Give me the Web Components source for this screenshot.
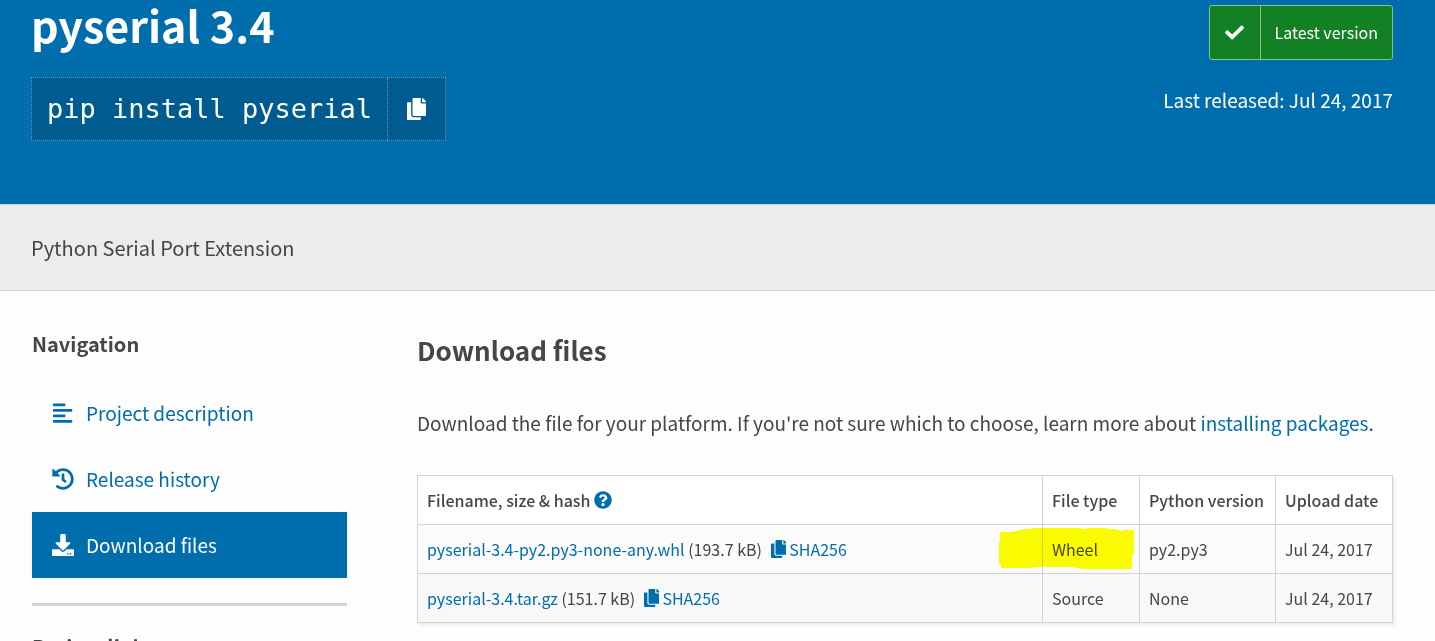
<!DOCTYPE html>
<html lang="en">
<head>
<meta charset="utf-8">
<meta name="viewport" content="width=device-width, initial-scale=1">
<title>pyserial 3.4</title>
<style>
  html { overflow-x: hidden; }
  body {
    --blue: #006dad;
    --line: #d3d3d3;
    --text: #464646;
    margin: 0;
    background: #fdfdfd;
    color: var(--text);
    font-family: "Noto Sans CJK SC", "Noto Sans", sans-serif;
    font-size: 19px;
    line-height: 32px;
  }
</style>
</head>
<body>
<project-header>
  <span slot="title">pyserial 3.4</span>
  <install-command slot="command">pip install pyserial</install-command>
  <version-badge slot="badge">Latest version</version-badge>
  <span slot="date">Last released: Jul 24, 2017</span>
</project-header>
<summary-bar>Python Serial Port Extension</summary-bar>
<project-layout>
  <project-sidebar slot="side">
    <nav-tab icon="align" href="#description">Project description</nav-tab>
    <nav-tab icon="history" href="#history">Release history</nav-tab>
    <nav-tab icon="download" href="#files" active>Download files</nav-tab>
  </project-sidebar>
  <download-panel></download-panel>
</project-layout>

<script>
const define = (name, html, setup) => {
  const template = document.createElement('template');
  template.innerHTML = html;
  customElements.define(name, class extends HTMLElement {
    constructor() {
      super();
      this.attachShadow({ mode: 'open' }).append(template.content.cloneNode(true));
    }
    connectedCallback() { if (setup) setup(this, this.shadowRoot); }
  });
};

const ICONS = {
  copy: ['0 0 448 512', 'M320 448v40c0 13.255-10.745 24-24 24H24c-13.255 0-24-10.745-24-24V120c0-13.255 10.745-24 24-24h72v296c0 30.879 25.121 56 56 56h168zm0-344V0H152c-13.255 0-24 10.745-24 24v368c0 13.255 10.745 24 24 24h272c13.255 0 24-10.745 24-24V128H344c-13.2 0-24-10.8-24-24zm120.971-31.029L375.029 7.029A24 24 0 0 0 358.059 0H352v96h96v-6.059a24 24 0 0 0-7.029-16.97z'],
  check: ['0 0 512 512', 'M173.898 439.404l-166.4-166.4c-9.997-9.997-9.997-26.206 0-36.204l36.203-36.204c9.997-9.998 26.207-9.998 36.204 0L192 312.69 432.095 72.596c9.997-9.997 26.207-9.997 36.204 0l36.203 36.204c9.997 9.997 9.997 26.206 0 36.204l-294.4 294.401c-9.998 9.997-26.207 9.997-36.204-.001z'],
  align: ['0 0 448 512', 'M13 32h262q13 0 13 13v38q0 13-13 13H13Q0 96 0 83V45Q0 32 13 32zM16 160h416q16 0 16 16v32q0 16-16 16H16q-16 0-16-16v-32q0-16 16-16zM13 288h262q13 0 13 13v38q0 13-13 13H13q-13 0-13-13v-38q0-13 13-13zM16 416h416q16 0 16 16v32q0 16-16 16H16q-16 0-16-16v-32q0-16 16-16z'],
  history: ['0 0 512 512', 'M504 255.531c.253 136.64-111.18 248.372-247.82 248.468-59.015.042-113.223-20.53-155.822-54.911-11.077-8.94-11.905-25.541-1.839-35.607l11.267-11.267c8.609-8.609 22.353-9.551 31.891-1.984C173.062 425.135 212.781 440 256 440c101.705 0 184-82.311 184-184 0-101.705-82.311-184-184-184-48.814 0-93.149 18.969-126.068 49.932l50.754 50.754c10.08 10.08 2.941 27.314-11.313 27.314H24c-8.837 0-16-7.163-16-16V38.627c0-14.254 17.234-21.393 27.314-11.314l49.372 49.372C129.209 34.136 189.552 8 256 8c136.81 0 247.747 110.78 248 247.531zm-180.912 78.784l9.823-12.63c8.138-10.463 6.253-25.542-4.21-33.679L288 256.349V152c0-13.255-10.745-24-24-24h-16c-13.255 0-24 10.745-24 24v135.651l65.409 50.874c10.463 8.137 25.541 6.253 33.679-4.21z'],
  download: ['0 0 512 512', 'M216 0h80c13.3 0 24 10.7 24 24v168h87.7c17.8 0 26.7 21.5 14.1 34.1L269.7 378.3c-7.5 7.5-19.8 7.5-27.3 0L90.1 226.1c-12.6-12.6-3.7-34.1 14.1-34.1H192V24c0-13.3 10.7-24 24-24zm296 376v112c0 13.3-10.7 24-24 24H24c-13.3 0-24-10.7-24-24V376c0-13.3 10.7-24 24-24h146.7l49 49c20.1 20.1 52.5 20.1 72.6 0l49-49H488c13.3 0 24 10.7 24 24zm-124 88c0-11-9-20-20-20s-20 9-20 20 9 20 20 20 20-9 20-20zm64 0c0-11-9-20-20-20s-20 9-20 20 9 20 20 20 20-9 20-20z'],
  question: ['0 0 512 512', 'M504 256c0 136.997-111.043 248-248 248S8 392.997 8 256C8 119.083 119.043 8 256 8s248 111.083 248 248zM262.655 90c-54.497 0-89.255 22.957-116.549 63.758-3.536 5.286-2.353 12.415 2.715 16.258l34.699 26.31c5.205 3.947 12.621 3.008 16.665-2.122 17.864-22.658 30.113-35.797 57.303-35.797 20.429 0 45.698 13.148 45.698 32.958 0 14.976-12.363 22.667-32.534 33.976C247.128 238.528 216 254.941 216 296v4c0 6.627 5.373 12 12 12h56c6.627 0 12-5.373 12-12v-1.333c0-28.462 83.186-29.647 83.186-106.667 0-58.002-60.165-102-116.531-102zM256 338c-25.365 0-46 20.635-46 46 0 25.364 20.635 46 46 46s46-20.636 46-46c0-25.364-20.635-46-46-46z']
};

define('icon-glyph', `
  <style>
    :host { display: inline-flex; flex: none; justify-content: center; height: var(--size, 18px); }
    svg { display: block; height: 100%; fill: currentColor; }
  </style>
  <svg aria-hidden="true"><path/></svg>`,
  (el, root) => {
    const [box, d] = ICONS[el.getAttribute('name')];
    root.querySelector('svg').setAttribute('viewBox', box);
    root.querySelector('path').setAttribute('d', d);
  });

define('install-command', `
  <style>
    :host { display: inline-flex; color: #fff; background: #005b91; border: 1px dotted #5f9cc0; }
    code { padding: 0 15px; font: 27px/62px "DejaVu Sans Mono", monospace; white-space: nowrap; }
    button {
      display: flex; align-items: center; justify-content: center; width: 58px; padding: 0;
      color: inherit; background: none; border: 0; border-left: 1px dotted #5f9cc0; cursor: pointer;
    }
    icon-glyph { --size: 22px; }
  </style>
  <code><slot></slot></code>
  <button type="button" aria-label="Copy install command"><icon-glyph name="copy"></icon-glyph></button>`);

define('version-badge', `
  <style>
    :host { display: inline-block; }
    a {
      display: flex; color: #fff; background: #148024; border: 1px solid #89bf91; border-radius: 3px;
      font-size: 16px; line-height: 53px; text-decoration: none; white-space: nowrap;
    }
    .mark { display: flex; align-items: center; justify-content: center; width: 50px; border-right: 1px solid #89bf91; }
    .label { padding: 0 14px; }
    icon-glyph { --size: 19px; }
  </style>
  <a href="#latest"><span class="mark"><icon-glyph name="check"></icon-glyph></span><span class="label"><slot></slot></span></a>`);

define('project-header', `
  <style>
    :host { display: block; color: #fff; background: var(--blue); }
    header { display: flex; flex-wrap: wrap; justify-content: space-between; padding: 0 42px 63px 31px; }
    h1 { margin: 0 0 29px; font-size: 43px; line-height: 48px; font-weight: 600; }
    .package { display: flex; flex-direction: column; align-items: flex-start; }
    .meta { display: flex; flex-direction: column; align-items: flex-end; gap: 24px; padding-top: 5px; }
    p { margin: 0; }
  </style>
  <header>
    <div class="package"><h1><slot name="title"></slot></h1><slot name="command"></slot></div>
    <div class="meta"><slot name="badge"></slot><p><slot name="date"></slot></p></div>
  </header>`);

define('summary-bar', `
  <style>
    :host { display: block; background: #ececec; border: solid var(--line); border-width: 1px 0; }
    p { margin: 0; padding: 27px 42px 26px 31px; font-size: 20px; }
  </style>
  <p><slot></slot></p>`);

define('project-layout', `
  <style>
    :host {
      display: grid; grid-template-columns: minmax(0, 315fr) minmax(0, 976fr); gap: 70px;
      align-items: start; padding: 37px 42px 0 32px;
    }
    @media (max-width: 900px) { :host { grid-template-columns: minmax(0, 1fr); } }
  </style>
  <slot name="side"></slot><slot></slot>`);

define('nav-tab', `
  <style>
    :host { display: block; }
    a {
      display: flex; align-items: center; gap: 12px; padding: 17px 20px;
      color: var(--blue); text-decoration: none;
    }
    :host([active]) a { color: #fff; background: var(--blue); }
    icon-glyph { --size: 22px; width: 22px; }
  </style>
  <a><slot></slot></a>`,
  (el, root) => {
    const link = root.querySelector('a');
    link.setAttribute('href', el.getAttribute('href'));
    const icon = document.createElement('icon-glyph');
    icon.setAttribute('name', el.getAttribute('icon'));
    link.prepend(icon);
  });

define('project-sidebar', `
  <style>
    :host { display: block; }
    h2 { margin: 0; font-size: 20px; line-height: 32px; font-weight: 600; }
    nav { margin-top: 20px; }
    hr { margin: 25px 0; border: 0; border-top: 3px solid var(--line); }
  </style>
  <h2>Navigation</h2>
  <nav aria-label="Project"><slot></slot></nav>
  <hr>
  <h2>Project links</h2>`);

define('highlight-mark', `
  <style>
    :host { position: absolute; left: -44px; top: 3px; mix-blend-mode: multiply; pointer-events: none; }
    svg { display: block; }
  </style>
  <svg width="136" height="42" viewBox="0 0 136 42" aria-hidden="true">
    <path fill="#ff0" d="M1 4H15V3H19V2H24V1H34V0H82V1H88V0H108V1H117V2H120V3H124V2H135V25H134V27H133V41H82V40H76V39H47V38H44V39H34V40H2V36H0V14H1Z"/>
  </svg>`);

define('file-table', `
  <style>
    :host { display: block; overflow-x: auto; padding-bottom: 8px; margin-right: -8px; padding-right: 8px; }
    table {
      width: 100%; min-width: 800px; table-layout: fixed; border-collapse: collapse; background: #fff;
      font-size: 16px; line-height: 24px; box-shadow: 2px 2px 3px rgba(0, 0, 0, .07);
    }
    .type { width: 97px; }
    .python { width: 136px; }
    .date { width: 117px; }
    th, td { padding: 12px 9px; border: 1px solid var(--line); text-align: left; white-space: nowrap; }
    th { font-weight: 500; }
    tbody tr { background: #fbfbfb; }
    tbody tr:nth-child(even) { background: #f8f8f8; }
    a { color: var(--blue); text-decoration: none; }
    icon-glyph { --size: 18px; vertical-align: -2px; }
    .hash { margin-left: 5px; }
    .hash icon-glyph { margin-right: 3px; }
    .marked { position: relative; }
  </style>
  <table>
    <colgroup><col><col class="type"><col class="python"><col class="date"></colgroup>
    <thead>
      <tr>
        <th scope="col">Filename, size &amp; hash <a href="#hashes" aria-label="Hash help"><icon-glyph name="question"></icon-glyph></a></th>
        <th scope="col">File type</th><th scope="col">Python version</th><th scope="col">Upload date</th>
      </tr>
    </thead>
    <tbody>
      <tr>
        <td><a href="#whl">pyserial-3.4-py2.py3-none-any.whl</a> (193.7 kB) <a class="hash" href="#whl-hash"><icon-glyph name="copy"></icon-glyph>SHA256</a></td>
        <td class="marked">Wheel<highlight-mark></highlight-mark></td><td>py2.py3</td><td>Jul 24, 2017</td>
      </tr>
      <tr>
        <td><a href="#tar">pyserial-3.4.tar.gz</a> (151.7 kB) <a class="hash" href="#tar-hash"><icon-glyph name="copy"></icon-glyph>SHA256</a></td>
        <td>Source</td><td>None</td><td>Jul 24, 2017</td>
      </tr>
    </tbody>
  </table>`);

define('download-panel', `
  <style>
    :host { display: block; }
    h2 { margin: 0; font-size: 26px; line-height: 44px; font-weight: 600; }
    p { margin: 35px 0 36px; }
    a { color: var(--blue); text-decoration: none; }
  </style>
  <h2>Download files</h2>
  <p>Download the file for your platform. If you're not sure which to choose, learn more about <a href="#installing">installing packages</a>.</p>
  <file-table></file-table>`);
</script>
</body>
</html>
